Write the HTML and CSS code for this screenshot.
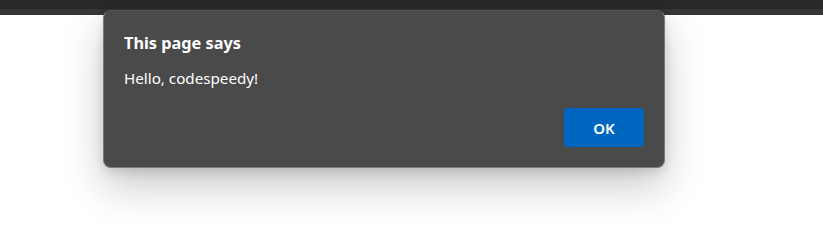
FILE: index.html
```html
<!DOCTYPE html>
<html>
    <head>
        <title>This page says</title>
        <link rel="stylesheet" href="styles.css">
    </head>
    <body>
        <div class="topbar">
            <div class="strip"></div>
        </div>
        <div class="page"></div>

        <div class="dialog">
            <h2 class="title">This page says</h2>
            <p class="message">Hello, codespeedy!</p>
            <div class="actions">
                <button class="ok">OK</button>
            </div>
        </div>
    </body>
</html>
```

FILE: styles.css
```css
* {
    box-sizing: border-box;
}

body {
    margin: 0;
    height: 100vh;
    background: #ffffff;
    font-family: 'Noto Sans', 'Open Sans', Arial, sans-serif;
    overflow: hidden;
}

.topbar {
    height: 15px;
    background: #292929;
    display: flex;
    flex-direction: column;
    justify-content: flex-end;
}

.strip {
    height: 6px;
    background: #363636;
}

.dialog {
    position: absolute;
    left: 103px;
    top: 10px;
    width: 562px;
    height: 158px;
    background: #4a4a4a;
    border: 1px solid #7a7a7a;
    border-top-color: #555555;
    border-radius: 8px;
    box-shadow: 0 18px 40px rgba(0, 0, 0, 0.22), 0 4px 10px rgba(0, 0, 0, 0.12);
    padding: 20px 20px 0 20px;
    display: flex;
    flex-direction: column;
    color: #ffffff;
}

.title {
    margin: 0;
    font-size: 16.3px;
    font-weight: 700;
    line-height: 24px;
}

.message {
    margin: 12px 0 0 0;
    font-size: 15.2px;
    line-height: 22px;
}

.actions {
    display: flex;
    justify-content: flex-end;
    margin-top: 19px;
}

.ok {
    width: 80px;
    height: 39px;
    background: #0067c0;
    color: #ffffff;
    border: none;
    border-radius: 4px;
    font-family: inherit;
    font-size: 15px;
    font-weight: 600;
}
```
